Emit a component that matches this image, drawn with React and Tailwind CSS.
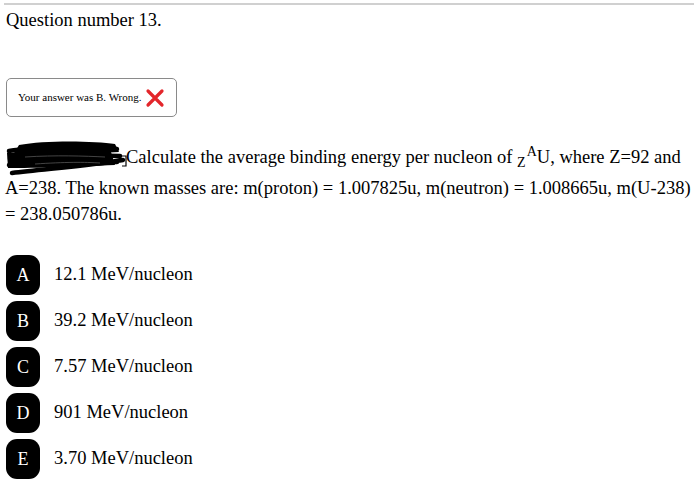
export default function App() {
  const options = [
    { letter: "A", text: "12.1 MeV/nucleon" },
    { letter: "B", text: "39.2 MeV/nucleon" },
    { letter: "C", text: "7.57 MeV/nucleon" },
    { letter: "D", text: "901 MeV/nucleon" },
    { letter: "E", text: "3.70 MeV/nucleon" },
  ];

  return (
    <div className="w-[700px] h-[491px] bg-white text-black overflow-hidden font-['Liberation_Serif','Times_New_Roman',serif]">
      <div className="pt-[3px] px-[4px]">
        <div className="h-[2px] w-[690px] bg-[#d0d0d0]" />
      </div>

      <div className="pl-[6px] pt-[4px] text-[18.5px] leading-[22px]">Question number 13.</div>

      {/* result box */}
      <div className="ml-[6px] mt-[47px] w-[171px] h-[39px] border border-[#8a8a8a] rounded-[5px] flex items-center pl-[11px] gap-[3px]">
        <span className="text-[11px]">Your answer was B. Wrong.</span>
        <svg width="20" height="20" viewBox="0 0 20 20" className="mt-[1px]">
          <path d="M3 3 L17 17 M17 3 L3 17" stroke="#e3262b" strokeWidth="3.2" strokeLinecap="round" />
        </svg>
      </div>

      {/* question */}
      <div className="mt-[23px] pl-[5px] pr-[4px] text-[18.5px] leading-[25.5px]">
        <svg width="122" height="36" viewBox="0 0 122 36" className="inline-block align-[-13px] -mr-[1px]">
          <path d="M14 5 C40 0 90 1 110 4 L114 12 C90 14 50 13 8 15 Z" fill="#000" />
          <path d="M4 11 C30 6 80 7 112 9 M5 18 C40 14 80 15 115 16 M4 25 C40 22 80 22 112 22 M7 33 C40 29 90 25 118 20" stroke="#000" strokeWidth="4.5" fill="none" strokeLinecap="round" />
          <path d="M2 13 C30 10 70 11 106 12 L110 25 C70 27 30 28 3 28 Z" fill="#000" />
          <path d="M20 17 C50 15 80 16 100 17 M30 24 C60 22 80 22 95 23" stroke="#555" strokeWidth="0.8" fill="none" />
          <path d="M112 16 L121 16 L121 26 L117 26" stroke="#000" strokeWidth="1.2" fill="none" />
        </svg>
        Calculate the average binding energy per nucleon of{" "}
        <span className="inline-block leading-none text-[14px] translate-y-[4px]">Z</span>
        <span className="inline-block leading-none text-[14px] -translate-y-[7px] ml-[1px]">A</span>U, where Z=92 and A=238. The known masses are: m(proton) = 1.007825u, m(neutron) = 1.008665u, m(U-238) = 238.050786u.
      </div>

      {/* options */}
      <div className="mt-[28px] pl-[6px] flex flex-col gap-[6px]">
        {options.map((o) => (
          <div key={o.letter} className="flex items-center">
            <div className="w-[34px] h-[40px] rounded-[11px] bg-black text-white flex items-center justify-center text-[18px]">
              {o.letter}
            </div>
            <span className="ml-[14px] text-[18.5px]">{o.text}</span>
          </div>
        ))}
      </div>
    </div>
  );
}
